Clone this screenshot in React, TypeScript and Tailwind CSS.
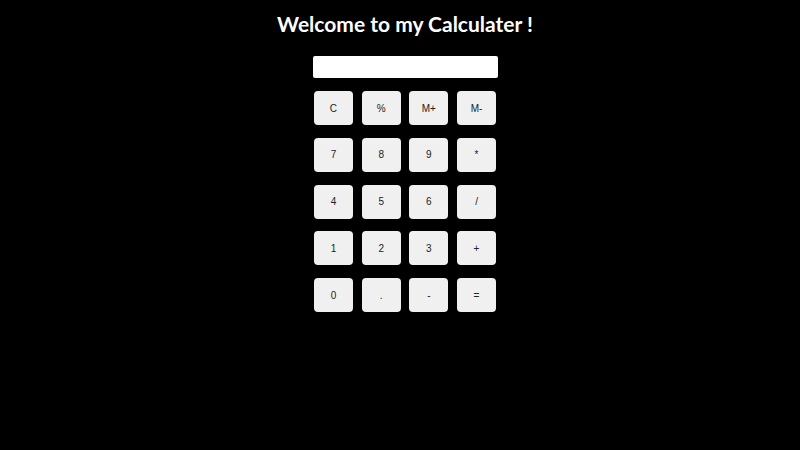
import React from "react";

const keys = [
  "C", "%", "M+", "M-",
  "7", "8", "9", "*",
  "4", "5", "6", "/",
  "1", "2", "3", "+",
  "0", ".", "-", "=",
];

export default function App() {
  return (
    <div className="min-h-[450px] w-full bg-black flex flex-col items-center pl-[10px]">
      <h1
        className="mt-[10px] text-white font-bold text-[21px] leading-[28px]"
        style={{ fontFamily: "Lato, 'Open Sans', sans-serif" }}
      >
        Welcome to my Calculater !
      </h1>
      <input
        type="text"
        readOnly
        className="mt-[18px] w-[185px] h-[22px] bg-white rounded-[2px] outline-none"
      />
      <div className="mt-[13px] grid grid-cols-[repeat(4,39px)] auto-rows-[34px] gap-x-[8.7px] gap-y-[12.75px]">
        {keys.map((k) => (
          <button
            key={k}
            className="bg-[#f0f0f0] rounded-[4px] text-[10px] text-[#222] flex items-center justify-center"
            style={{ fontFamily: "'Liberation Sans', Arial, sans-serif" }}
          >
            {k}
          </button>
        ))}
      </div>
    </div>
  );
}
